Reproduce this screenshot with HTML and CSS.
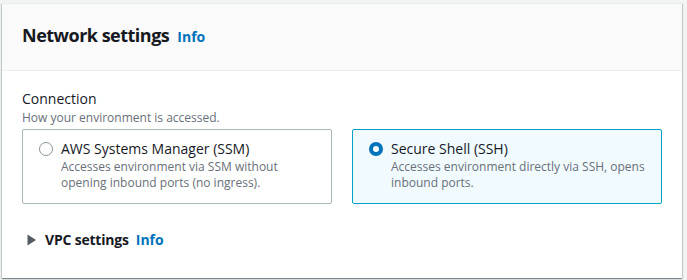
FILE: index.html
```html
<!DOCTYPE html>
<html lang="en">
<head>
    <meta charset="UTF-8">
    <meta name="viewport" content="width=device-width, initial-scale=1.0">
    <title>Network settings</title>
    <link rel="stylesheet" href="styles.css">
</head>
<body>
    <div class="container">
        <!-- Header -->
        <div class="header">
            <h2>Network settings</h2>
            <a class="info-link" href="#">Info</a>
        </div>

        <div class="content">
            <!-- Connection field -->
            <div class="field-label">Connection</div>
            <div class="field-desc">How your environment is accessed.</div>

            <div class="tiles">
                <label class="tile">
                    <span class="radio"></span>
                    <span class="tile-text">
                        <span class="tile-title">AWS Systems Manager (SSM)</span>
                        <span class="tile-desc">Accesses environment via SSM without opening inbound ports (no ingress).</span>
                    </span>
                </label>
                <label class="tile selected">
                    <span class="radio checked"></span>
                    <span class="tile-text">
                        <span class="tile-title">Secure Shell (SSH)</span>
                        <span class="tile-desc">Accesses environment directly via SSH, opens inbound ports.</span>
                    </span>
                </label>
            </div>

            <!-- VPC settings expander -->
            <div class="expander">
                <svg class="caret" width="16" height="16" viewBox="0 0 16 16">
                    <polygon points="3.5,2.5 12,8 3.5,13.5" fill="#545b64"/>
                </svg>
                <span class="expander-title">VPC settings</span>
                <a class="info-link" href="#">Info</a>
            </div>
        </div>
    </div>
</body>
</html>
```

FILE: styles.css
```css
body {
    font-family: "Open Sans", Arial, sans-serif;
    margin: 0;
    padding: 3px 5px 4px 2px;
    background-color: #f2f3f3;
    color: #16191f;
    font-size: 14px;
    line-height: 22px;
}
.container {
    background-color: #ffffff;
    border-top: 1px solid #eaeded;
    box-shadow: 0 1px 1px 0 rgba(0, 28, 36, 0.3), 1px 1px 1px 0 rgba(0, 28, 36, 0.15), -1px 1px 1px 0 rgba(0, 28, 36, 0.15);
}
.header {
    display: flex;
    align-items: baseline;
    padding: 19px 20px 22px;
    background-color: #fafafa;
    border-bottom: 1px solid #eaeded;
}
.header h2 {
    margin: 0;
    font-size: 18px;
    line-height: 24px;
    font-weight: 700;
    letter-spacing: -0.5px;
}
.info-link {
    margin-left: 8px;
    color: #0073bb;
    font-size: 14px;
    font-weight: 700;
    text-decoration: none;
}
.content {
    padding: 17px 20px 27px;
}
.field-desc {
    color: #687078;
    font-size: 12px;
    line-height: 16px;
}
.tiles {
    display: grid;
    grid-template-columns: 1fr 1fr;
    gap: 20px;
    margin-top: 3px;
}
.tile {
    display: flex;
    gap: 8px;
    padding: 9px 16px 12px;
    border: 1px solid #aab7b8;
    border-radius: 2px;
    cursor: pointer;
}
.tile.selected {
    border-color: #00a1c9;
    background-color: #f1faff;
}
.radio {
    flex: none;
    width: 14px;
    height: 14px;
    margin-top: 3px;
    box-sizing: border-box;
    border: 1px solid #879596;
    border-radius: 50%;
    background-color: #ffffff;
}
.radio.checked {
    border: 4px solid #0073bb;
}
.tile-text {
    display: flex;
    flex-direction: column;
}
.tile-title {
    line-height: 20px;
}
.tile-desc {
    color: #687078;
    font-size: 12px;
    line-height: 16px;
}
.expander {
    display: flex;
    align-items: center;
    margin-top: 25px;
}
.expander .info-link {
    margin-left: 7px;
}
.caret {
    margin-left: 2px;
    margin-right: 5px;
}
.expander-title {
    font-weight: 700;
    letter-spacing: -0.2px;
}
```
